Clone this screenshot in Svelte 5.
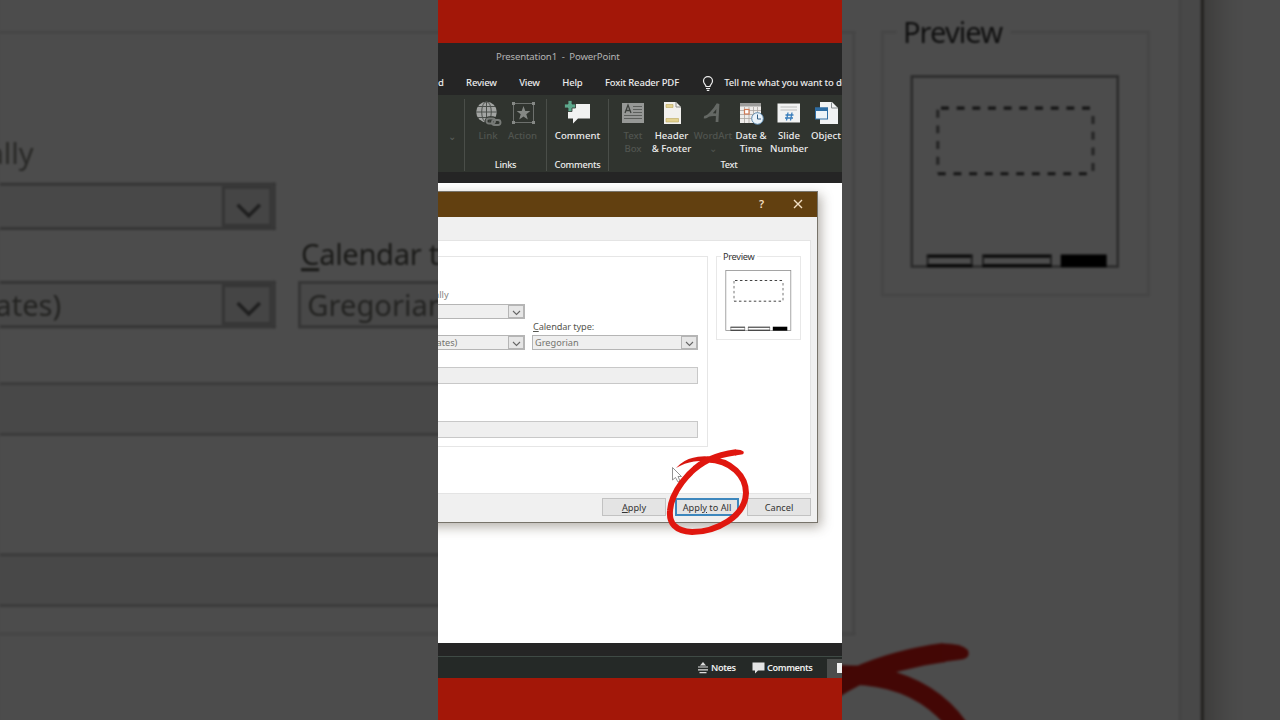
<script>
	const tabs = ['Review', 'View', 'Help', 'Foxit Reader PDF']

	const groups = [
		{
			name: 'Links',
			items: [
				{ id: 'link', lines: ['Link'], width: 34, off: true },
				{ id: 'action', lines: ['Action'], width: 35, off: true }
			]
		},
		{
			name: 'Comments',
			items: [{ id: 'comment', lines: ['Comment'], width: 50 }]
		},
		{
			name: 'Text',
			items: [
				{ id: 'textbox', lines: ['Text', 'Box'], width: 38, off: true },
				{ id: 'header', lines: ['Header', '& Footer'], width: 39 },
				{ id: 'wordart', lines: ['WordArt', '⌄'], width: 44, off: true },
				{ id: 'date', lines: ['Date &', 'Time'], width: 32 },
				{ id: 'number', lines: ['Slide', 'Number'], width: 44 },
				{ id: 'object', lines: ['Object'], width: 30 }
			]
		}
	]
</script>

{#snippet icon(id)}
	<svg class="icon" width="30" height="28" viewBox="0 0 30 28">
		{#if id === 'link'}
			<circle cx="13.5" cy="12" r="10.3" fill="#a3a5a3" />
			<g fill="none" stroke="#4b4f4b" stroke-width="1">
				<ellipse cx="13.5" cy="12" rx="4.8" ry="10.3" />
				<path d="M13.5 2v20M3 12h21M5 6.5h17M5 17.5h17" />
			</g>
			<g fill="none" stroke="#30342f" stroke-width="4.5">
				<rect x="14" y="18.5" width="8" height="5" rx="2.5" />
				<rect x="19" y="19.5" width="8" height="5" rx="2.5" />
			</g>
			<g fill="none" stroke="#777a77" stroke-width="1.9">
				<rect x="13.5" y="18.5" width="8.5" height="5" rx="2.5" />
				<rect x="19" y="20" width="8.5" height="5" rx="2.5" />
			</g>
		{:else if id === 'action'}
			<rect x="5.5" y="3.5" width="20" height="19" fill="none" stroke="#6d706d" />
			<g fill="#858885">
				<path d="M4 2h3v3H4zM24 2h3v3h-3zM4 21h3v3H4zM24 21h3v3h-3z" />
				<path d="M15.5 6l1.8 5h5l-4 3.200 1.500 5.200-4.300-3-4.300 3 1.500-5.200-4-3.200h5z" />
			</g>
		{:else if id === 'comment'}
			<path d="M5 4h22v14.500H15l-5 5v-5H5z" fill="#f1f2f1" />
			<path d="M5 .5h4V4h3.500v4H9v3.500H5V8H1.500V4H5z" fill="#5da78c" stroke="#30342f" stroke-width=".8" />
		{:else if id === 'textbox'}
			<rect x="4" y="3" width="22" height="20" fill="#969896" />
			<path d="M7 13l3-8 3 8M8 10.500h4" fill="none" stroke="#3c403c" stroke-width="1.300" />
			<path d="M15 6.500h9M15 9.500h9M15 12.500h9M6 15.500h18M6 18.500h18" stroke="#5c5f5c" />
		{:else if id === 'header'}
			<path d="M7 2h12l5 5v17H7z" fill="#f2f1ee" />
			<path d="M19 2v5h5" fill="none" stroke="#8c8c88" />
			<path d="M9 4.500h7v3H9zM9 18.500h12.500v3.500H9z" fill="#e3d290" stroke="#bba75e" stroke-width=".6" />
		{:else if id === 'wordart'}
			<path d="M6 17C10 18 17 9 20 4l-1 18M10 15.500c4-1 7-1 9.500-.500" fill="none" stroke="#646864" stroke-width="2.800" />
		{:else if id === 'date'}
			<rect x="4" y="3" width="21" height="20" fill="#eeecea" />
			<rect x="4" y="3" width="21" height="3.500" fill="#9c9c9a" />
			<path d="M8.500 7v16M13 7v16M17.500 7v16M21.500 7v16M4 10.500h21M4 14.500h21M4 18.500h21" stroke="#aaa5a0" stroke-width=".8" />
			<rect x="8.500" y="9.500" width="4.500" height="4.500" fill="#fff" stroke="#d17a55" stroke-width="1.200" />
			<circle cx="21.500" cy="18.500" r="5.800" fill="#eaf3fa" stroke="#5b89ad" />
			<path d="M21.500 14.500v4.500H25" fill="none" stroke="#315f84" />
		{:else if id === 'number'}
			<rect x="3.500" y="3.500" width="22.500" height="19" fill="#f1f2f2" />
			<path d="M6.500 7h16.500M6.500 10h16.500" stroke="#bbbcbb" />
			<path d="M14 12.500l-1.500 8M18 12.500l-1.500 8M11.500 15h8M11 18h8" stroke="#397dbb" stroke-width="1.300" />
		{:else}
			<path d="M9 2h12l6 6v16H9z" fill="#f1f2f3" />
			<path d="M20.500 2.500V8H27" fill="none" stroke="#858a8d" />
			<rect x="4.500" y="8" width="12" height="11" fill="#edf3f8" stroke="#2e6da4" />
			<path d="M4 7.500h13v3.500H4z" fill="#2e6da4" />
		{/if}
	</svg>
{/snippet}

{#snippet arrow()}
	<span class="arrow">
		<svg width="9" height="6" viewBox="0 0 9 6">
			<path d="M1 1l3.500 3.500L8 1" fill="none" stroke="#666" stroke-width="1.100" />
		</svg>
	</span>
{/snippet}

<!-- the slide with the dialog on it, used for the clip and for its enlarged backdrop -->
{#snippet slide()}
	<div class="slide">
		<div class="dialog">
			<div class="caption">
				<span>?</span>
				<svg width="10" height="10" viewBox="0 0 10 10">
					<path d="M1 1l8 8M9 1l-8 8" stroke="#f3dfc4" stroke-width="1.400" />
				</svg>
			</div>
			<div class="panel">
				<div class="options">
					<div class="label pale">ally</div>
					<div class="row">
						<div class="select first">{@render arrow()}</div>
					</div>
					<div class="label calendar"><u>C</u>alendar type:</div>
					<div class="row">
						<div class="select first"><span class="locale">ates)</span>{@render arrow()}</div>
						<div class="select second">Gregorian{@render arrow()}</div>
					</div>
					<div class="field"></div>
					<div class="field last"></div>
				</div>
				<div class="preview">
					<div class="legend">Preview</div>
					<svg width="67" height="62" viewBox="0 0 67 62">
						<rect x=".8" y=".5" width="65" height="60" fill="#fff" stroke="#8f8f8f" stroke-width=".8" />
						<path d="M10 10.500h48M9 31.200h48" stroke="#444" stroke-dasharray="2.500 2.450" />
						<path d="M9 11v20M58 13v19" stroke="#777" stroke-dasharray="2.500 2.450" />
						<path d="M5.500 57.200h14.500M5.500 60.200h14.500M23 57.200h22M23 60.200h22" stroke="#222" />
						<path d="M5.800 57v3M19.700 57v3M23.300 57v3M44.700 57v3" stroke="#666" stroke-width=".6" />
						<path d="M47.800 56.700h14.500v4h-14.500z" />
					</svg>
				</div>
			</div>
			<div class="buttons">
				<button><u>A</u>pply</button>
				<button class="default">Appl<u>y</u> to All</button>
				<button>Cancel</button>
			</div>
		</div>
		<svg class="marker" width="100" height="100" viewBox="660 440 100 100">
			<path d="M672.500 467.500v12.500l3-2.500 2.500 4.500 2-1-2-4.500h3.500z" fill="#fff" stroke="#777" stroke-width=".8" />
			<path d="M676 468Q687 455 709 456.500l-1 5Q691 459 676 468z" fill="#d8160f" />
			<path
				d="M707 459.500C732 460 746 477 746 493C745 517 716 532 692 532C675 531 669 523 670 511C671 493 688 470 708 460C717 456 727 453.500 736 452.300"
				fill="none" stroke="#e0170f" stroke-width="6" />
			<path d="M735 449.500Q741 449.300 743.500 451.500Q744.500 454 741.500 454.500L735 455.400z" fill="#e0170f" />
		</svg>
	</div>
{/snippet}

<div class="stage">
	<div class="backdrop" aria-hidden="true">{@render slide()}</div>

	<div class="clip">
		<div class="title">Presentation1&nbsp; -&nbsp; PowerPoint</div>
		<div class="tabs">
			<span class="cut">d</span>
			{#each tabs as tab}
				<span>{tab}</span>
			{/each}
			<svg width="12" height="15" viewBox="0 0 12 15">
				<path d="M4 10.500C4 8.500 1.500 8 1.500 5a4.500 4.300 0 0 1 9 0c0 3-2.500 3.500-2.500 5.500zM4 12.500h4M4.800 14.300h2.500" fill="none" stroke="#eee" stroke-width="1.200" />
			</svg>
			<span class="tell">Tell me what you want to do</span>
		</div>
		<div class="ribbon">
			<div class="rest">⌄</div>
			{#each groups as group}
				<div class="group {group.name.toLowerCase()}">
					<div class="items">
						{#each group.items as item}
							<div class="item" class:off={item.off} style="width: {item.width}px">
								{@render icon(item.id)}
								{#each item.lines as line}
									<span>{line}</span>
								{/each}
							</div>
						{/each}
					</div>
					<div class="name">{group.name}</div>
				</div>
			{/each}
		</div>
		<div class="gap"></div>
		{@render slide()}
		<div class="status">
			<svg width="10" height="12" viewBox="0 0 10 12">
				<path d="M5 0l3 3.500H2z" fill="#ddd" />
				<path d="M0 5h10M0 7.800h10M1.500 10.600h7" stroke="#ddd" stroke-width="1.200" />
			</svg>
			<span class="notes">Notes</span>
			<svg width="13" height="12" viewBox="0 0 13 12">
				<path d="M.5.500h12v8H6L3 11.500v-3H.5z" fill="#e4e4e4" />
			</svg>
			<span class="comments-label">Comments</span>
			<div class="view"><i></i></div>
		</div>
	</div>
</div>

<style>
	:global(body) {
		overflow: hidden;
	}

	.stage {
		position: relative;
		display: flex;
		justify-content: center;
		width: 1280px;
		height: 720px;
		overflow: hidden;
		background: #4c4c4c;
		font-family: "Noto Sans", "Open Sans", sans-serif;
		font-size: 9.2px;
	}

	.backdrop {
		position: absolute;
		top: 0;
		left: 438px;
		box-sizing: border-box;
		width: 404px;
		height: 720px;
		padding-top: 183px;
		transform: scale(3.168);
		filter: brightness(.3) blur(.4px);
	}

	.clip {
		position: relative;
		box-sizing: border-box;
		width: 404px;
		height: 720px;
		padding: 43px 0 42px;
		overflow: hidden;
		background: #a31708;
		color: #ececec;
	}

	.title {
		height: 29px;
		box-sizing: border-box;
		padding-left: 58px;
		background: #252525;
		color: #b4b4b4;
		font-size: 9.6px;
		letter-spacing: -.15px;
		line-height: 28px;
		white-space: nowrap;
	}

	.tabs {
		display: flex;
		align-items: center;
		gap: 22.400px;
		height: 23px;
		box-sizing: border-box;
		padding-bottom: 2px;
		background: #252525;
		font-size: 9.5px;
		font-weight: 500;
		letter-spacing: -.18px;
		white-space: nowrap;
	}

	.cut {
		width: 6px;
	}

	.tabs svg {
		flex: none;
		margin: 2px 0 0 1px;
	}

	.tell {
		margin-left: -12.500px;
	}

	.ribbon {
		display: flex;
		height: 77px;
		background: #30342f;
		font-size: 9.6px;
		font-weight: 500;
	}

	.rest {
		flex: none;
		box-sizing: border-box;
		width: 26px;
		padding: 35px 0 0 10px;
		color: #5b5f5b;
	}

	.group {
		display: flex;
		flex: none;
		flex-direction: column;
		box-sizing: border-box;
		height: 72px;
		margin-top: 4px;
		border-left: 1px solid #4a4e49;
	}

	.links {
		width: 82px;
	}

	.comments {
		width: 62px;
	}

	.text {
		width: 241px;
	}

	.items {
		display: flex;
		height: 59px;
		padding-top: 1px;
	}

	.links .items,
	.comments .items {
		justify-content: center;
	}

	.text .items {
		padding-left: 5px;
	}

	.item {
		display: flex;
		flex: none;
		flex-direction: column;
		align-items: center;
		line-height: 13px;
		white-space: nowrap;
	}

	.item .icon {
		flex: none;
		margin-bottom: 1px;
	}

	.off {
		color: #50544f;
	}

	.name {
		font-size: 9.2px;
		letter-spacing: -.25px;
		line-height: 13px;
		text-align: center;
	}

	.gap {
		height: 11px;
		background: #252525;
	}

	.slide {
		position: relative;
		box-sizing: border-box;
		height: 460px;
		padding-top: 8px;
		background: #fff;
	}

	.dialog {
		box-sizing: border-box;
		width: 400px;
		height: 332px;
		margin-left: -20px;
		padding-left: 20px;
		border: solid #77736a;
		border-width: 1px 1px 1px 0;
		background: #f0f0f0;
		box-shadow: 3px 4px 11px rgba(60, 50, 35, .38);
		color: #55554f;
	}

	.caption {
		display: flex;
		align-items: center;
		justify-content: flex-end;
		gap: 29px;
		height: 25px;
		box-sizing: border-box;
		padding: 0 14px 2px 0;
		background: #624010;
		color: #f3dfc4;
		font-size: 11px;
		font-weight: 600;
	}

	.panel {
		display: flex;
		align-items: flex-start;
		gap: 8px;
		box-sizing: border-box;
		width: 373px;
		height: 254px;
		margin-top: 23px;
		padding-top: 15px;
		border: solid #e4e4e4;
		border-width: 1px 1px 1px 0;
		background: #fff;
	}

	.options {
		box-sizing: border-box;
		width: 270px;
		height: 191px;
		padding-top: 32px;
		border: solid #e6e6e6;
		border-width: 1px 1px 1px 0;
	}

	.label {
		line-height: 12px;
	}

	.pale {
		margin: 0 0 3px -4px;
		color: #85857f;
	}

	.calendar {
		margin: 2px 0 2px 95px;
		letter-spacing: -.1px;
	}

	.row {
		display: flex;
		gap: 7px;
	}

	.select {
		display: flex;
		align-items: center;
		justify-content: space-between;
		box-sizing: border-box;
		height: 15px;
		padding-bottom: 1px;
		border: 1px solid #b5b5b5;
		background: #efefef;
		color: #73736e;
	}

	.first {
		width: 87px;
		border-left: 0;
	}

	.second {
		width: 166px;
		padding-left: 2px;
	}

	.locale {
		margin-left: -1.5px;
	}

	.arrow {
		display: flex;
		align-items: center;
		justify-content: center;
		box-sizing: border-box;
		width: 16px;
		height: 13px;
		margin: 0 0 -1px auto;
		padding-top: 2px;
		border: 1px solid #b5b5b5;
		background: #e6e6e6;
	}

	.field {
		box-sizing: border-box;
		width: 260px;
		height: 17px;
		margin-top: 17px;
		border: solid #c8c8c8;
		border-width: 1px 1px 1px 0;
		background: #efefef;
	}

	.last {
		margin-top: 37px;
	}

	.preview {
		display: flex;
		flex-direction: column;
		box-sizing: border-box;
		width: 85px;
		height: 84px;
		padding-left: 8px;
		border: 1px solid #e8e8e8;
	}

	.legend {
		width: fit-content;
		margin: -6px 0 7px -4px;
		padding: 0 3px 0 2px;
		background: #fff;
		color: #333;
		letter-spacing: -.3px;
		line-height: 12px;
	}

	.buttons {
		display: flex;
		gap: 9px;
		padding: 4px 0 0 164px;
	}

	button {
		box-sizing: border-box;
		width: 64px;
		height: 18px;
		padding: 0;
		border: 1px solid #c2c2c2;
		background: #e4e4e4;
		color: #333;
		font: inherit;
	}

	button:last-child {
		margin-left: -1px;
	}

	.default {
		border: 2px solid #3d87bd;
	}

	.marker {
		position: absolute;
		top: 257px;
		left: 222px;
	}

	.status {
		display: flex;
		align-items: center;
		box-sizing: border-box;
		height: 35px;
		padding: 14px 0 0 260px;
		background: linear-gradient(#252525 13px, #3f4a45 13px, #3f4a45 14px, #252927 14px);
		font-size: 9.2px;
		font-weight: 600;
		letter-spacing: -.4px;
	}

	.status svg {
		flex: none;
	}

	.notes {
		width: 41px;
		padding-left: 3px;
		box-sizing: border-box;
	}

	.status .notes + svg {
		margin-left: 3px;
	}

	.comments-label {
		flex: none;
		width: 60px;
		padding-left: 2px;
	}

	.view {
		flex: none;
		align-self: stretch;
		margin-top: 2px;
		box-sizing: border-box;
		width: 15px;
		padding: 4px 0 0 10px;
		background: #4b4d4c;
	}

	.view i {
		display: block;
		width: 8px;
		height: 10px;
		background: #f0f0f0;
	}
</style>
